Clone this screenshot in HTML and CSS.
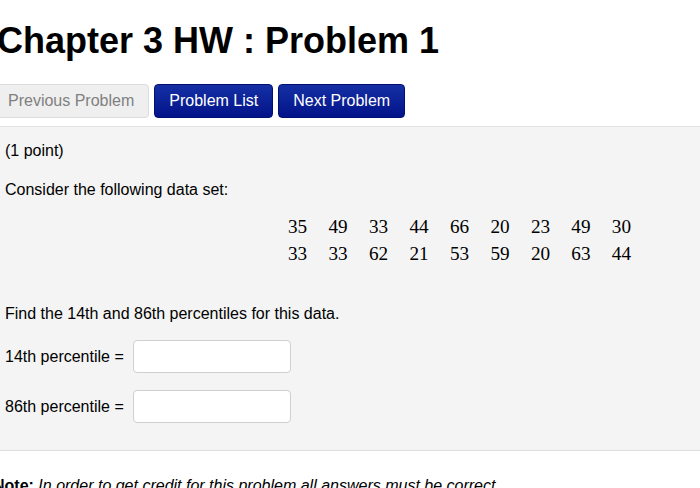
FILE: index.html
```html
<!DOCTYPE html>
<html lang="en">

<head>
    <meta charset="UTF-8">
    <meta name="viewport" content="width=device-width, initial-scale=1.0">
    <title>Chapter 3 HW : Problem 1</title>
    <link rel="stylesheet" href="styles.css">
</head>

<body>
    <div class="page">
        <h1 class="title">Chapter 3 HW : Problem 1</h1>

        <div class="nav-buttons">
            <button class="nav-btn disabled">Previous Problem</button>
            <button class="nav-btn primary">Problem List</button>
            <button class="nav-btn primary">Next Problem</button>
        </div>

        <div class="problem">
            <p class="points">(1 point)</p>
            <p class="intro">Consider the following data set:</p>

            <div class="data-set">
                <span>35</span><span>49</span><span>33</span><span>44</span><span>66</span><span>20</span><span>23</span><span>49</span><span>30</span>
                <span>33</span><span>33</span><span>62</span><span>21</span><span>53</span><span>59</span><span>20</span><span>63</span><span>44</span>
            </div>

            <p class="question">Find the 14th and 86th percentiles for this data.</p>

            <div class="answer-row">
                <label for="ans-14">14th percentile =</label>
                <input type="text" id="ans-14" class="answer">
            </div>
            <div class="answer-row">
                <label for="ans-86">86th percentile =</label>
                <input type="text" id="ans-86" class="answer">
            </div>
        </div>

        <p class="note"><b>Note:</b> <i>In order to get credit for this problem all answers must be correct.</i></p>
    </div>
</body>

</html>
```

FILE: styles.css
```css
html,
body {
    overflow: hidden;
}

body {
    font-family: "Liberation Sans", Arial, sans-serif;
    font-size: 16px;
    line-height: 20px;
    color: #000;
    background-color: #fff;
    margin: 0;
}

.page {
    width: 933px;
    margin-left: -7px;
}

.title {
    font-size: 36px;
    line-height: 40px;
    font-weight: bold;
    margin: 21px 0 0 4px;
}

.nav-buttons {
    display: flex;
    gap: 5px;
    margin-top: 23px;
}

.nav-btn {
    font-family: "Liberation Sans", Arial, sans-serif;
    font-size: 16px;
    line-height: 18px;
    padding: 7px 14px;
    border-radius: 4px;
    cursor: pointer;
}

.nav-btn.disabled {
    color: #808080;
    background-color: #efefef;
    border: 1px solid #dcdcdc;
}

.nav-btn.primary {
    color: white;
    background: linear-gradient(to bottom, #1530a4, #03138a);
    border: 1px solid #021072;
}

/* problem body */
.problem {
    margin-top: 8px;
    padding: 14px 12px 27px;
    background-color: #f4f4f4;
    border-top: 1px solid #e4e4e4;
    border-bottom: 1px solid #dedede;
}

.problem p {
    margin: 0;
}

.intro {
    margin-top: 19px !important;
}

.data-set {
    display: grid;
    grid-template-columns: repeat(9, auto);
    justify-content: center;
    column-gap: 21.3px;
    margin-top: 14px;
    font-family: "Liberation Serif", "Times New Roman", serif;
    font-size: 19.2px;
    line-height: 26.5px;
}

.question {
    margin-top: 37px !important;
}

.answer-row {
    display: flex;
    align-items: center;
    gap: 9px;
    margin-top: 17px;
}

.question + .answer-row {
    margin-top: 16px;
}

.answer {
    width: 158px;
    height: 33px;
    box-sizing: border-box;
    background-color: white;
    border: 1px solid #cfcfcf;
    border-radius: 4px;
}

.note {
    margin: 25px 0 0;
}
```
